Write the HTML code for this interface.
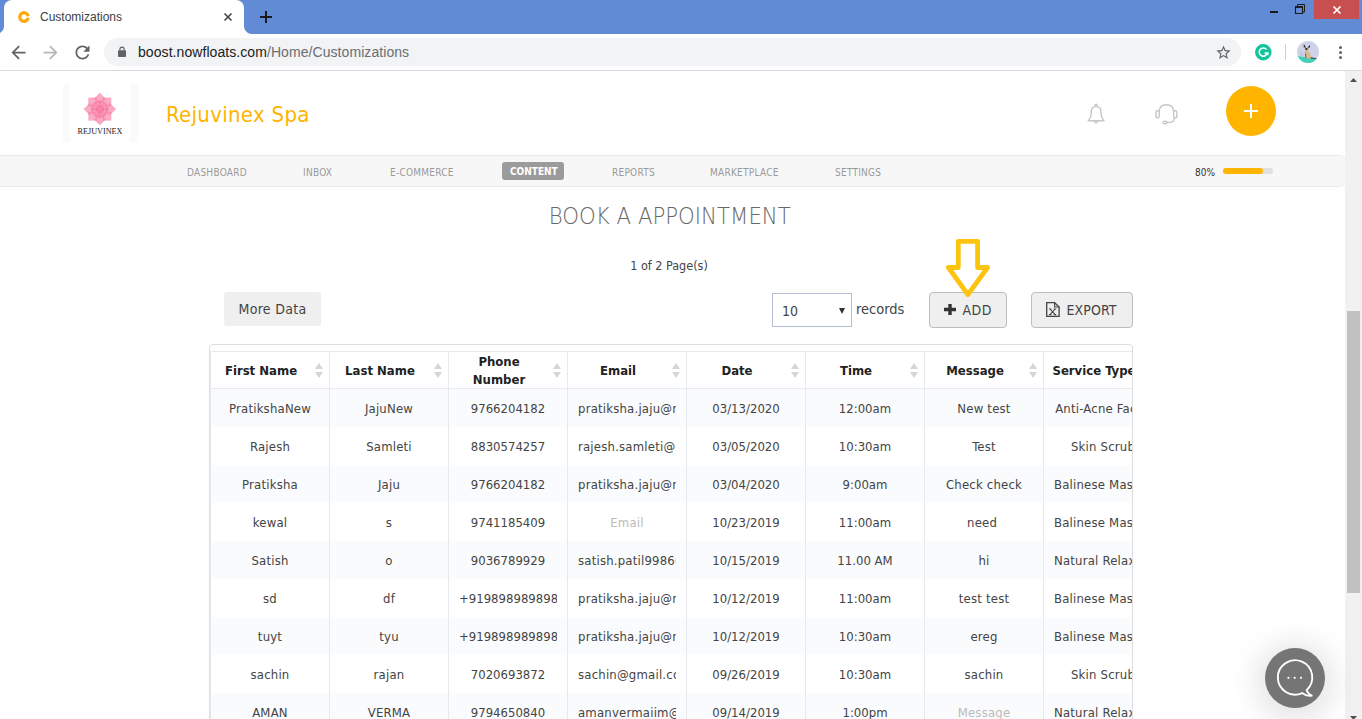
<!DOCTYPE html>
<html lang="en"><head><meta charset="utf-8"><title>Customizations</title>
<style>
*{box-sizing:border-box}
html,body{margin:0;padding:0}
body{width:1362px;height:719px;overflow:hidden;position:relative;background:#fff;
 font-family:"DejaVu Sans Condensed","Liberation Sans",sans-serif;color:#444}
.abs{position:absolute}
svg{position:absolute;overflow:visible}
/* ---------- browser chrome ---------- */
.chrome{font-family:"Liberation Sans",sans-serif}
.titlebar{position:absolute;left:0;top:0;width:1362px;height:34px;background:#628bd6}
.tab{position:absolute;left:4px;top:0;width:240px;height:34px;background:#fff;border-radius:8px 8px 0 0}
.tab:before,.tab:after{content:"";position:absolute;bottom:0;width:8px;height:8px;background:radial-gradient(circle at 0 0,rgba(255,255,255,0) 7.5px,#fff 8.5px)}
.tab:before{left:-8px}
.tab:after{right:-8px;background:radial-gradient(circle at 100% 0,rgba(255,255,255,0) 7.5px,#fff 8.5px)}
.tabtitle{position:absolute;left:40px;top:10px;font-size:12px;line-height:15px;color:#3c4043;white-space:nowrap}
.toolbar{position:absolute;left:0;top:34px;width:1362px;height:37px;background:#fff;border-bottom:1px solid #d7dae0}
.omni{position:absolute;left:104px;top:38px;width:1137px;height:28px;border-radius:14px;background:#f1f3f4}
.url{position:absolute;left:138px;top:43px;font-size:14px;line-height:18px;color:#202124;white-space:nowrap;letter-spacing:.07px}
.url span{color:#6a6e72}
.closebtn{position:absolute;left:1314px;top:0;width:45px;height:19px;background:#c84f4f}
/* ---------- page ---------- */
.hdr{position:absolute;left:0;top:71px;width:1345px;height:84px;background:#fff}
.logo{position:absolute;left:63px;top:83px;width:75px;height:60px;border-radius:3px;background:linear-gradient(90deg,#fafafa 0,#fafafa 7px,#fff 7px,#fff 67px,#fafafa 67px)}
.logotxt{position:absolute;left:70px;top:127px;width:60px;text-align:center;font-family:"Liberation Serif",serif;font-size:8.2px;line-height:10px;color:#222;white-space:nowrap;letter-spacing:0}
.brand{position:absolute;left:166px;top:101px;font-size:22px;line-height:28px;color:#ffb400;white-space:nowrap;letter-spacing:.3px}
.fab{position:absolute;left:1226px;top:86px;width:50px;height:50px;border-radius:50%;background:#ffb400}
.fab:before{content:"";position:absolute;left:18px;top:24px;width:14px;height:2px;background:#fff}
.fab:after{content:"";position:absolute;left:24px;top:18px;width:2px;height:14px;background:#fff}
.nav{position:absolute;left:0;top:155px;width:1345px;height:32px;background:#f7f7f7;border-top:1px solid #e9e9e9;border-bottom:1px solid #e9e9e9;border-radius:0 5px 5px 0}
.navl a{position:absolute;top:163px;font-size:10px;line-height:20px;color:#999;white-space:nowrap;text-decoration:none;letter-spacing:.25px}
.navl a.on{top:162px;height:18px;line-height:20px;background:#9b9b9b;color:#fff;font-weight:bold;border-radius:3px;padding:0 8px;letter-spacing:0;width:62px}
.pct{position:absolute;left:1195px;top:166px;font-size:10px;line-height:13px;color:#333}
.bar{position:absolute;left:1223px;top:168px;width:50px;height:6px;border-radius:3px;background:#e0e0e0}
.bar i{position:absolute;left:0;top:0;width:40px;height:6px;border-radius:3px;background:#ffb400}
.sb{position:absolute;left:1345px;top:71px;width:17px;height:648px;background:#f1f1f1}
.sb .thumb{position:absolute;left:2px;top:240px;width:13px;height:282px;background:#c1c1c1}
.h1{position:absolute;left:-1px;top:200px;width:1342px;text-align:center;font-family:"DejaVu Sans Light","DejaVu Sans","Liberation Sans",sans-serif;font-weight:200;font-size:23px;line-height:32px;color:#686868;white-space:nowrap}
.h1 span{display:inline-block;transform:scaleX(.925);transform-origin:50% 50%}
.pg{position:absolute;left:-2px;top:258px;width:1342px;text-align:center;font-size:12.5px;line-height:16px;color:#444;white-space:nowrap}
.btn{position:absolute;height:36px;border:1px solid #bdbdbd;border-radius:4px;background:#efefef;font-size:14px;color:#444}
.more{position:absolute;left:224px;top:292px;width:97px;height:34px;border-radius:3px;background:#efefef;font-size:14px;line-height:34px;text-align:center;color:#444;letter-spacing:.3px}
.sel{position:absolute;left:772px;top:293px;width:80px;height:34px;border:1px solid #b4bfd6;background:#fff}
.sel span{position:absolute;left:9px;top:8px;font-size:14px;line-height:18px;color:#444}
.sel i{position:absolute;left:66px;top:14px;width:0;height:0;border-left:3px solid transparent;border-right:3px solid transparent;border-top:6px solid #333}
.rec{position:absolute;left:856px;top:299px;font-size:14.5px;line-height:20px;color:#444}
.lbl{position:absolute;font-size:14px;line-height:18px;color:#444;white-space:nowrap}
/* table */
.tblwrap{position:absolute;left:209px;top:344px;width:924px;height:400px;border:1px solid #ddd;border-radius:4px;padding-top:6px;overflow:hidden;background:#fff}
.tbl{border-collapse:separate;border-spacing:0;table-layout:fixed;width:952px}
.tbl th,.tbl td{width:119px;padding:0;border-left:1px solid #e6eaef;text-align:center;font-size:13px;position:relative}
.tbl th{height:38px;border-top:1px solid #e6eaef;border-bottom:1px solid #e6eaef;font-weight:bold;color:#222;line-height:18px;vertical-align:middle}
.thc{margin:0 26px 0 8px;text-align:center;position:relative;top:1px}
.tbl td{height:38px;color:#444}
.tbl tbody tr:nth-child(odd) td{background:#fafbfd}
.inp{position:relative;top:1px;margin:0 10px;width:98px;overflow:hidden;white-space:nowrap;text-align:center;line-height:20px;height:20px}
.inp.ph{color:#bbb}
.tbl td:nth-child(1) .inp,.tbl td:nth-child(2) .inp,.tbl td:nth-child(4) .inp,.tbl td:nth-child(7) .inp,.tbl td:nth-child(8) .inp{letter-spacing:.2px}
.sort{position:absolute;right:5px;top:11px;width:9px;height:15px}
.sort i{position:absolute;left:0;width:0;height:0;border-left:4.5px solid transparent;border-right:4.5px solid transparent}
.sort .up{top:0;border-bottom:6.5px solid #d6d6d6}
.sort .dn{bottom:0;border-top:6.5px solid #d6d6d6}
.chat{position:absolute;left:1265px;top:648px;width:60px;height:60px;border-radius:50%;background:#757575;box-shadow:0 4px 28px 10px rgba(0,0,0,.10)}
</style></head>
<body>
<div class="chrome">
<div class="titlebar"></div>
<div class="tab"></div>
<!-- favicon -->
<svg style="left:18px;top:11px" width="12" height="12" viewBox="0 0 12 12"><path d="M10.17 5.2 A4.25 4.25 0 1 0 10.17 6.8" fill="none" stroke="#fbab10" stroke-width="3.3"/></svg>
<div class="tabtitle">Customizations</div>
<!-- tab close -->
<svg style="left:224px;top:13px" width="8" height="8" viewBox="0 0 8 8"><path d="M.5 .5 L7.5 7.5 M7.5 .5 L.5 7.5" stroke="#3c4043" stroke-width="1.5" fill="none"/></svg>
<!-- new tab plus -->
<svg style="left:260px;top:11px" width="12" height="12" viewBox="0 0 12 12"><path d="M6 0 V12 M0 6 H12" stroke="#1a1a1a" stroke-width="2" fill="none"/></svg>
<!-- window controls -->
<div class="abs" style="left:1270px;top:11px;width:8px;height:2px;background:#1a1a1a"></div>
<svg style="left:1294px;top:4px" width="11" height="11" viewBox="0 0 11 11"><path d="M1.5 3 H8.5 V9.5 H1.5 Z" fill="none" stroke="#1a1a1a" stroke-width="1.15"/><rect x="1" y="2" width="8" height="1.8" fill="#1a1a1a"/><path d="M3.5 2 V.5 H10.5 V8 H9" fill="none" stroke="#1a1a1a" stroke-width="1"/></svg>
<div class="closebtn"></div>
<svg style="left:1333px;top:5.5px" width="8" height="8" viewBox="0 0 8 8"><path d="M.5 .5 L7.5 7.5 M7.5 .5 L.5 7.5" stroke="#fff" stroke-width="1.7" fill="none"/></svg>
<div class="toolbar"></div>
<!-- back / forward / reload -->
<svg style="left:7.5px;top:41.5px" width="21" height="21" viewBox="0 0 24 24"><path fill="#5f6368" d="M20 11H7.83l5.59-5.59L12 4l-8 8 8 8 1.41-1.41L7.83 13H20v-2z"/></svg>
<svg style="left:39.8px;top:41.5px" width="21" height="21" viewBox="0 0 24 24"><path fill="#b5b7ba" d="M12 4l-1.41 1.41L16.17 11H4v2h12.17l-5.58 5.59L12 20l8-8z"/></svg>
<svg style="left:71.6px;top:41.5px" width="21" height="21" viewBox="0 0 24 24"><path fill="#5f6368" d="M17.65 6.35C16.2 4.9 14.21 4 12 4c-4.42 0-7.99 3.58-7.99 8s3.57 8 7.99 8c3.73 0 6.84-2.55 7.73-6h-2.08c-.82 2.33-3.04 4-5.65 4-3.31 0-6-2.69-6-6s2.69-6 6-6c1.66 0 3.14.69 4.22 1.78L13 11h7V4l-2.35 2.35z"/></svg>
<div class="omni"></div>
<!-- lock -->
<svg style="left:118px;top:46px" width="8" height="11" viewBox="0 0 8 11"><rect x="0" y="4.2" width="8" height="6.8" rx=".8" fill="#5f6368"/><path d="M1.9 4.6 V3.2 A2.1 2.1 0 0 1 6.1 3.2 V4.6" fill="none" stroke="#5f6368" stroke-width="1.2"/></svg>
<div class="url">boost.nowfloats.com<span>/Home/Customizations</span></div>
<!-- star -->
<svg style="left:1214.5px;top:43.5px" width="17" height="17" viewBox="0 0 24 24"><path fill="#5f6368" d="M22 9.24l-7.19-.62L12 2 9.19 8.63 2 9.24l5.46 4.73L5.82 21 12 17.27 18.18 21l-1.63-7.03L22 9.24zM12 15.4l-3.76 2.27 1-4.28-3.32-2.88 4.38-.38L12 6.1l1.71 4.04 4.38.38-3.32 2.88 1 4.28L12 15.4z"/></svg>
<!-- grammarly -->
<svg style="left:1254.7px;top:43.8px" width="16.5" height="16.5" viewBox="0 0 16.5 16.5"><circle cx="8.25" cy="8.25" r="8.25" fill="#15c39a"/><path d="M11.6 5.6 A4.1 4.1 0 1 0 12.3 8.9 H9.6" fill="none" stroke="#fff" stroke-width="1.5"/><path d="M12.9 8.2 V11.2" stroke="#fff" stroke-width="1.3"/></svg>
<div class="abs" style="left:1285px;top:44px;width:1px;height:16px;background:#cfd1d4"></div>
<!-- avatar -->
<svg style="left:1297px;top:41px" width="22" height="22" viewBox="0 0 22 22"><defs><clipPath id="av"><circle cx="11" cy="11" r="11"/></clipPath></defs><g clip-path="url(#av)"><rect width="22" height="22" fill="#ced3ea"/><path d="M0 15 L22 18.1 V22 H0 Z" fill="#41d1ba"/><path d="M3.2 14.8 L3.6 10.6 L4.8 12.6 L5.4 9.8 L6.4 15.2 Z" fill="#c3c4d2"/><path d="M7.5 6 L8.4 8.8 L7.7 10 L8 14 L8.1 17.4 L13.9 17.6 C14.2 15.4 14.2 13.2 12.6 11.8 C11.6 11 11 10.2 11.2 9 L12.4 6.2 L10.6 7 L8.8 6.8 Z" fill="#d9bc8f"/><path d="M6.9 2.9 L6.6 6.3 L9 6.8 Z M12.8 3.7 L10.6 6.8 L13 6.5 Z" fill="#2b2422"/><ellipse cx="9.4" cy="8" rx="1.3" ry="1.1" fill="#2b2422"/><path d="M8.1 13 L8.6 17.5 L9.4 17.5 L9 12 Z" fill="#6b543f"/><path d="M13.6 16.2 L19.4 17.3 L19.2 17.9 L13.6 17.5 Z" fill="#4a3a30"/></g></svg>
<!-- menu dots -->
<svg style="left:1339px;top:46px" width="3" height="13" viewBox="0 0 3 13"><circle cx="1.5" cy="1.5" r="1.5" fill="#5f6368"/><circle cx="1.5" cy="6.5" r="1.5" fill="#5f6368"/><circle cx="1.5" cy="11.5" r="1.5" fill="#5f6368"/></svg>
</div>
<div class="hdr"></div>
<div class="logo"></div>
<svg style="left:83px;top:92px" width="34" height="34" viewBox="-16.8 -17.1 34 34">
 <circle r="8.8" fill="#f88fb0" fill-opacity=".9"/>
 <g fill="#f7799f" fill-opacity=".64">
  <rect x="-4.2" y="-14.50" width="8.4" height="8.4" transform="rotate(0) rotate(45 0 -10.3)"/>
  <rect x="-4.2" y="-14.50" width="8.4" height="8.4" transform="rotate(45) rotate(45 0 -10.3)"/>
  <rect x="-4.2" y="-14.50" width="8.4" height="8.4" transform="rotate(90) rotate(45 0 -10.3)"/>
  <rect x="-4.2" y="-14.50" width="8.4" height="8.4" transform="rotate(135) rotate(45 0 -10.3)"/>
  <rect x="-4.2" y="-14.50" width="8.4" height="8.4" transform="rotate(180) rotate(45 0 -10.3)"/>
  <rect x="-4.2" y="-14.50" width="8.4" height="8.4" transform="rotate(225) rotate(45 0 -10.3)"/>
  <rect x="-4.2" y="-14.50" width="8.4" height="8.4" transform="rotate(270) rotate(45 0 -10.3)"/>
  <rect x="-4.2" y="-14.50" width="8.4" height="8.4" transform="rotate(315) rotate(45 0 -10.3)"/>
 </g>
 <circle r="4.3" fill="#f4608f" fill-opacity=".55"/>
 <path d="M-10 -10 L10 10 M-10 10 L10 -10" stroke="#fff" stroke-opacity=".45" stroke-width=".45"/>
</svg>
<div class="logotxt">REJUVINEX</div>
<div class="brand">Rejuvinex Spa</div>
<!-- bell -->
<svg style="left:1086px;top:102px" width="20" height="24" viewBox="1086 102 20 24"><g fill="none" stroke="#c6c6c6" stroke-width="1.4" stroke-linecap="round" stroke-linejoin="round"><circle cx="1096.1" cy="105.2" r="1.1"/><path d="M1096.1 106.6 C1092.4 106.6 1091.2 109.4 1091.2 112.2 C1091.2 116.2 1090.2 118.6 1088.2 120.8 H1104 C1102 118.6 1101 116.2 1101 112.2 C1101 109.4 1099.8 106.6 1096.1 106.6 Z"/><path d="M1094.5 121.6 A1.7 1.7 0 0 0 1097.7 121.6"/></g></svg>
<!-- headset -->
<svg style="left:1154px;top:102px" width="25" height="24" viewBox="1154 102 25 24"><g fill="none" stroke="#c6c6c6" stroke-width="1.4" stroke-linecap="round" stroke-linejoin="round"><path d="M1159.2 111.6 C1159.2 107.2 1162 104.7 1166.4 104.7 C1170.8 104.7 1173.6 107.2 1173.6 111.6"/><rect x="1156" y="110.8" width="3.2" height="7" rx="1.2"/><rect x="1173.6" y="110.8" width="3.2" height="7" rx="1.2"/><path d="M1174.4 118 C1174.4 121 1172.6 122.4 1169.4 122.4 H1167"/><ellipse cx="1165" cy="122.5" rx="2" ry="1.3"/></g></svg>
<div class="fab"></div>
<div class="nav">
</div>
<div class="navl">
<a style="left:187px">DASHBOARD</a>
<a style="left:303px">INBOX</a>
<a style="left:390px">E-COMMERCE</a>
<a class="on" style="left:502px">CONTENT</a>
<a style="left:612px">REPORTS</a>
<a style="left:710px">MARKETPLACE</a>
<a style="left:835px">SETTINGS</a>
</div>
<div class="pct">80%</div>
<div class="bar"><i></i></div>
<div class="h1"><span>BOOK A APPOINTMENT</span></div>
<div class="pg">1 of 2 Page(s)</div>
<div class="more">More Data</div>
<div class="sel"><span>10</span><i></i></div>
<div class="rec">records</div>
<div class="btn" style="left:929px;top:292px;width:78px"></div>
<svg style="left:943.5px;top:304px" width="12" height="11" viewBox="0 0 12 11"><path d="M4.3 0 H7.7 V3.8 H12 V7.2 H7.7 V11 H4.3 V7.2 H0 V3.8 H4.3 Z" fill="#333"/></svg>
<div class="lbl" style="left:962.5px;top:301px;letter-spacing:.5px">ADD</div>
<div class="btn" style="left:1031px;top:292px;width:102px"></div>
<svg style="left:1045.5px;top:302px" width="14" height="15" viewBox="0 0 14 15"><path d="M.7 .7 H8.6 L13.1 5 V14.3 H.7 Z" fill="none" stroke="#444" stroke-width="1.3"/><path d="M8.6 .7 V5 H13.1" fill="none" stroke="#444" stroke-width="1.1"/><path d="M4 7 L9.2 12.6 M9.2 7 L4 12.6 M3 7 H5.4 M7.8 7 H10.2 M3 12.6 H5.4 M7.8 12.6 H10.2" stroke="#444" stroke-width="1.1" fill="none"/></svg>
<div class="lbl" style="left:1066.5px;top:301px;letter-spacing:.1px">EXPORT</div>
<!-- yellow arrow -->
<svg style="left:940px;top:234px" width="56" height="68" viewBox="940 234 56 68"><path d="M958.3 241.3 H977.6 V267.5 H987.6 L967.9 294.6 L948.4 267.5 H958.3 Z" fill="none" stroke="#fcc30f" stroke-width="4.8" stroke-linejoin="round"/></svg>
<div class="tblwrap"><table class="tbl"><thead><tr>
<th><div class="thc">First Name</div><span class="sort"><i class="up"></i><i class="dn"></i></span></th>
<th><div class="thc">Last Name</div><span class="sort"><i class="up"></i><i class="dn"></i></span></th>
<th><div class="thc">Phone Number</div><span class="sort"><i class="up"></i><i class="dn"></i></span></th>
<th><div class="thc">Email</div><span class="sort"><i class="up"></i><i class="dn"></i></span></th>
<th><div class="thc">Date</div><span class="sort"><i class="up"></i><i class="dn"></i></span></th>
<th><div class="thc">Time</div><span class="sort"><i class="up"></i><i class="dn"></i></span></th>
<th><div class="thc">Message</div><span class="sort"><i class="up"></i><i class="dn"></i></span></th>
<th><div class="thc">Service Type</div></th>
</tr></thead><tbody>
<tr>
<td><div class="inp">PratikshaNew</div></td>
<td><div class="inp">JajuNew</div></td>
<td><div class="inp">9766204182</div></td>
<td><div class="inp">pratiksha.jaju@nowfloats.com</div></td>
<td><div class="inp">03/13/2020</div></td>
<td><div class="inp">12:00am</div></td>
<td><div class="inp">New test</div></td>
<td><div class="inp">Anti-Acne Facial</div></td>
</tr>
<tr>
<td><div class="inp">Rajesh</div></td>
<td><div class="inp">Samleti</div></td>
<td><div class="inp">8830574257</div></td>
<td><div class="inp">rajesh.samleti@nowfloats.com</div></td>
<td><div class="inp">03/05/2020</div></td>
<td><div class="inp">10:30am</div></td>
<td><div class="inp">Test</div></td>
<td><div class="inp">Skin Scrub</div></td>
</tr>
<tr>
<td><div class="inp">Pratiksha</div></td>
<td><div class="inp">Jaju</div></td>
<td><div class="inp">9766204182</div></td>
<td><div class="inp">pratiksha.jaju@nowfloats.com</div></td>
<td><div class="inp">03/04/2020</div></td>
<td><div class="inp">9:00am</div></td>
<td><div class="inp">Check check</div></td>
<td><div class="inp">Balinese Massage</div></td>
</tr>
<tr>
<td><div class="inp">kewal</div></td>
<td><div class="inp">s</div></td>
<td><div class="inp">9741185409</div></td>
<td><div class="inp ph">Email</div></td>
<td><div class="inp">10/23/2019</div></td>
<td><div class="inp">11:00am</div></td>
<td><div class="inp">need&nbsp;</div></td>
<td><div class="inp">Balinese Massage</div></td>
</tr>
<tr>
<td><div class="inp">Satish</div></td>
<td><div class="inp">o</div></td>
<td><div class="inp">9036789929</div></td>
<td><div class="inp">satish.patil99860@gmail.com</div></td>
<td><div class="inp">10/15/2019</div></td>
<td><div class="inp">11.00 AM</div></td>
<td><div class="inp">hi</div></td>
<td><div class="inp">Natural Relaxation</div></td>
</tr>
<tr>
<td><div class="inp">sd</div></td>
<td><div class="inp">df</div></td>
<td><div class="inp">+919898989898</div></td>
<td><div class="inp">pratiksha.jaju@nowfloats.com</div></td>
<td><div class="inp">10/12/2019</div></td>
<td><div class="inp">11:00am</div></td>
<td><div class="inp">test test</div></td>
<td><div class="inp">Balinese Massage</div></td>
</tr>
<tr>
<td><div class="inp">tuyt</div></td>
<td><div class="inp">tyu</div></td>
<td><div class="inp">+919898989898</div></td>
<td><div class="inp">pratiksha.jaju@nowfloats.com</div></td>
<td><div class="inp">10/12/2019</div></td>
<td><div class="inp">10:30am</div></td>
<td><div class="inp">ereg</div></td>
<td><div class="inp">Balinese Massage</div></td>
</tr>
<tr>
<td><div class="inp">sachin</div></td>
<td><div class="inp">rajan</div></td>
<td><div class="inp">7020693872</div></td>
<td><div class="inp">sachin@gmail.com</div></td>
<td><div class="inp">09/26/2019</div></td>
<td><div class="inp">10:30am</div></td>
<td><div class="inp">sachin</div></td>
<td><div class="inp">Skin Scrub</div></td>
</tr>
<tr>
<td><div class="inp">AMAN</div></td>
<td><div class="inp">VERMA</div></td>
<td><div class="inp">9794650840</div></td>
<td><div class="inp">amanvermaiim@gmail.com</div></td>
<td><div class="inp">09/14/2019</div></td>
<td><div class="inp">1:00pm</div></td>
<td><div class="inp ph">Message</div></td>
<td><div class="inp">Natural Relaxation</div></td>
</tr>
</tbody></table></div>
<!-- scrollbar -->
<div class="sb"><div class="thumb"></div>
<svg style="left:5px;top:7px" width="7" height="4" viewBox="0 0 7 4"><path d="M0 4 L3.5 0 L7 4 Z" fill="#505050"/></svg>
<svg style="left:5px;top:645px" width="7" height="4" viewBox="0 0 7 4"><path d="M0 0 L3.5 4 L7 0 Z" fill="#505050"/></svg>
</div>
<!-- chat -->
<div class="chat"></div>
<svg style="left:1275px;top:658px" width="40" height="40" viewBox="1275 658 40 40"><g fill="none" stroke="#fff" stroke-width="1.9" stroke-linejoin="round"><path d="M1306.6 690.2 A17.2 17.2 0 1 0 1302.2 693.1 C1304.6 695 1308.4 696.4 1311.8 695.6 C1309.2 694.4 1307.4 692.4 1306.6 690.2 Z"/></g><circle cx="1288.4" cy="677.8" r="1.1" fill="#fff"/><circle cx="1294.7" cy="677.8" r="1.1" fill="#fff"/><circle cx="1301" cy="677.8" r="1.1" fill="#fff"/></svg>

</body></html>
